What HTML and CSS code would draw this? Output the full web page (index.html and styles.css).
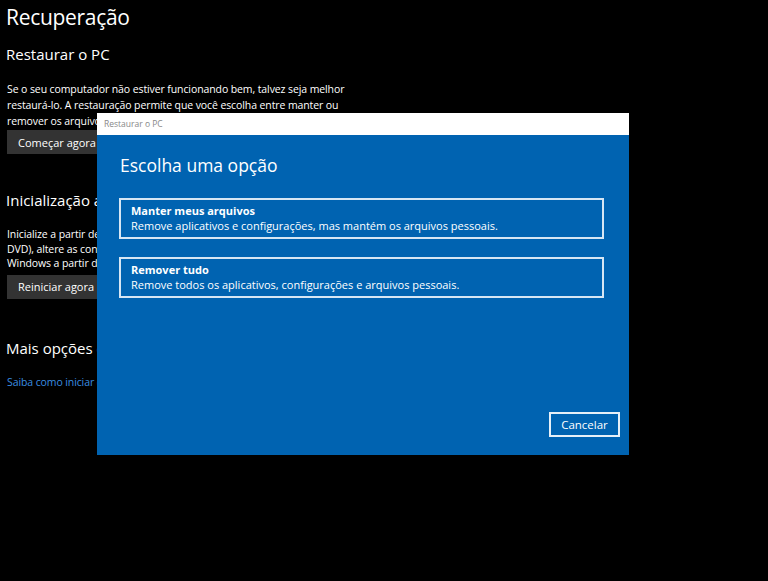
FILE: index.html
```html
<!DOCTYPE html>
<html lang="pt-BR">
<head>
<meta charset="utf-8">
<title>Recuperação</title>
<link rel="stylesheet" href="styles.css">
</head>
<body>
<main class="page">
  <h1 class="page-title">Recuperação</h1>

  <section class="section">
    <h2 class="section-title">Restaurar o PC</h2>
    <p class="section-text">Se o seu computador não estiver funcionando bem, talvez seja melhor<br>restaurá-lo. A restauração permite que você escolha entre manter ou<br>remover os arquivos pessoais e depois reinstala o Windows.</p>
    <button class="action">Começar agora</button>
  </section>

  <section class="section section-second">
    <h2 class="section-title">Inicialização avançada</h2>
    <p class="section-text tight">Inicialize a partir de um dispositivo ou disco (como uma unidade USB ou<br>DVD), altere as configurações de inicialização do Windows ou restaure o<br>Windows a partir de uma imagem do sistema. Isso reiniciará o PC.</p>
    <button class="action">Reiniciar agora</button>
  </section>

  <section class="section section-third">
    <h2 class="section-title">Mais opções de recuperação</h2>
    <a class="link" href="#">Saiba como iniciar do zero com uma instalação limpa do Windows</a>
  </section>
</main>

<div class="dialog">
  <div class="dialog-titlebar">Restaurar o PC</div>
  <div class="dialog-body">
    <h2 class="dialog-heading">Escolha uma opção</h2>
    <div class="options">
      <div class="option">
        <div class="option-title">Manter meus arquivos</div>
        <div class="option-desc">Remove aplicativos e configurações, mas mantém os arquivos pessoais.</div>
      </div>
      <div class="option">
        <div class="option-title">Remover tudo</div>
        <div class="option-desc">Remove todos os aplicativos, configurações e arquivos pessoais.</div>
      </div>
    </div>
    <div class="dialog-footer">
      <button class="cancel">Cancelar</button>
    </div>
  </div>
</div>
</body>
</html>
```

FILE: styles.css
```css
* { box-sizing: border-box; }
html, body {
  margin: 0;
  padding: 0;
  background: #000;
  width: 768px;
  height: 581px;
  overflow: hidden;
}
body {
  font-family: "Open Sans", "Noto Sans", "Liberation Sans", sans-serif;
  color: #fff;
  position: relative;
}
.page {
  padding: 0 0 0 6px;
}
.page-title {
  margin: 0;
  padding-top: 2px;
  font-weight: 400;
  font-size: 21px;
  line-height: 30px;
  letter-spacing: -0.3px;
}
.section-title {
  margin: 0;
  font-weight: 400;
  font-size: 15px;
  line-height: 20px;
}
.section { padding-top: 12px; }
.section-second { padding-top: 36px; }
.section-third { padding-top: 39px; }
.section-text {
  margin: 17px 0 0 1px;
  font-size: 10.5px;
  line-height: 16px;
  letter-spacing: -0.1px;
}
.section-text.tight { line-height: 14.5px; margin-top: 17px; }
.action {
  margin: 1px 0 0 1px;
  display: block;
  background: #333;
  border: none;
  color: #fff;
  font-family: inherit;
  font-size: 11px;
  height: 24px;
  padding: 0 11px;
  white-space: nowrap;
}
.section-second .action { margin-top: 4px; }
.link {
  display: block;
  margin: 17px 0 0 1px;
  color: #3a8ee0;
  text-decoration: none;
  font-size: 10.5px;
  letter-spacing: -0.1px;
}

.dialog {
  position: absolute;
  left: 97px;
  top: 113px;
  width: 532px;
  height: 342px;
  display: flex;
  flex-direction: column;
}
.dialog-titlebar {
  background: #fff;
  height: 22px;
  color: #888;
  font-size: 8.5px;
  line-height: 22px;
  padding-left: 7px;
}
.dialog-body {
  flex: 1;
  background: #0063b1;
  padding: 17px 9px 18px 22px;
  display: flex;
  flex-direction: column;
}
.dialog-heading {
  margin: 0 0 0 1px;
  font-weight: 400;
  font-size: 17.5px;
  line-height: 26px;
}
.options {
  margin: 20px 16px 0 0;
  display: flex;
  flex-direction: column;
  gap: 18px;
}
.option {
  border: 2px solid #d6e6f4;
  height: 41px;
  padding: 3px 10px 0 10px;
}
.option-title {
  font-weight: 700;
  font-size: 11px;
  line-height: 15px;
}
.option-desc {
  font-size: 11px;
  line-height: 15px;
}
.dialog-footer {
  margin-top: auto;
  display: flex;
  justify-content: flex-end;
}
.cancel {
  background: transparent;
  border: 2px solid #e6f0f8;
  color: #fff;
  font-family: inherit;
  font-size: 11.5px;
  width: 71px;
  height: 25px;
  padding: 0;
}
```
